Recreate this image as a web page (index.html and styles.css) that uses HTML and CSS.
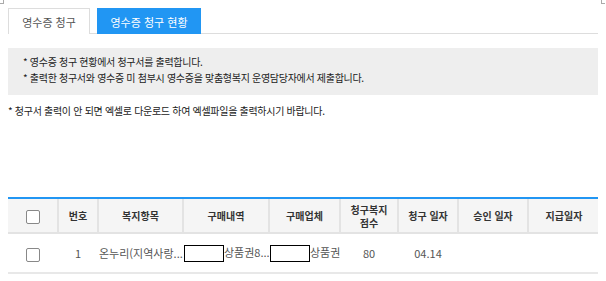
FILE: index.html
```html
<!DOCTYPE html>
<html lang="ko">
  <head>
    <meta charset="UTF-8" />
    <title>영수증 청구 현황</title>
    <link rel="stylesheet" href="styles.css">
  </head>
  <body>
    <span class="corner corner-left"></span>
    <span class="corner corner-right"></span>

    <div class="wrap">
      <div class="tabs">
        <a class="tab">영수증 청구</a>
        <a class="tab active">영수증 청구 현황</a>
      </div>

      <div class="info">
        <p>* 영수증 청구 현황에서 청구서를 출력합니다.</p>
        <p>* 출력한 청구서와 영수증 미 첨부시 영수증을 맞춤형복지 운영담당자에서 제출합니다.</p>
      </div>

      <p class="note">* 청구서 출력이 안 되면 엑셀로 다운로드 하여 엑셀파일을 출력하시기 바랍니다.</p>

      <table class="list">
        <colgroup>
          <col style="width: 50px" />
          <col style="width: 40px" />
          <col style="width: 85px" />
          <col style="width: 86px" />
          <col style="width: 71px" />
          <col style="width: 58px" />
          <col style="width: 60px" />
          <col style="width: 70px" />
          <col style="width: 71px" />
        </colgroup>
        <thead>
          <tr>
            <th><span class="check"></span></th>
            <th>번호</th>
            <th>복지항목</th>
            <th>구매내역</th>
            <th>구매업체</th>
            <th class="two"><span>청구복지</span><span>점수</span></th>
            <th>청구 일자</th>
            <th>승인 일자</th>
            <th>지급일자</th>
          </tr>
        </thead>
        <tbody>
          <tr>
            <td><span class="check"></span></td>
            <td>1</td>
            <td class="left">온누리(지역사랑...</td>
            <td class="left"><span class="mask"></span>상품권8...</td>
            <td class="left"><span class="mask"></span>상품권</td>
            <td>80</td>
            <td>04.14</td>
            <td></td>
            <td></td>
          </tr>
        </tbody>
      </table>
    </div>
  </body>
</html>
```

FILE: styles.css
```css
body {
  margin: 8px;
  font-family: "Noto Sans CJK KR", "Noto Sans", sans-serif;
  font-size: 10px;
  color: #444;
  background-color: #fff;
}
.corner {
  position: absolute;
  top: 0;
  width: 3px;
  height: 3px;
  border-color: #aaa;
  border-style: solid;
}
.corner-left {
  left: 0;
  border-width: 0 1px 1px 0;
}
.corner-right {
  left: 601px;
  border-width: 0 0 1px 1px;
}
.wrap {
  width: 591px;
}
.tabs {
  display: flex;
  gap: 7px;
  height: 25px;
  border-bottom: 1px solid #ddd;
}
.tab {
  display: flex;
  align-items: center;
  justify-content: center;
  height: 25px;
  width: 80px;
  border: 1px solid #ddd;
  border-bottom: none;
  font-size: 11px;
  color: #555;
  background-color: #fff;
}
.tab.active {
  width: 102px;
  border-color: #2196f3;
  background-color: #2196f3;
  color: #fff;
}
.info {
  margin-top: 14px;
  height: 47px;
  box-sizing: border-box;
  padding: 6px 15px 0;
  background-color: #eee;
  color: #222;
}
.info p,
.note {
  margin: 0;
  line-height: 16px;
  letter-spacing: -0.3px;
}
.note {
  margin-top: 8px;
  color: #222;
}
.list {
  margin-top: 78px;
  width: 591px;
  table-layout: fixed;
  border-collapse: collapse;
  text-align: center;
}
.list th {
  height: 33px;
  padding: 0;
  background-color: #f5f5f5;
  border-top: 2px solid #2196f3;
  border-left: 2px solid #e3e3e3;
  border-bottom: 2px solid #e3e3e3;
  color: #333;
  font-weight: bold;
  font-size: 10px;
}
.list th:first-child {
  border-left: none;
}
.list th.two span {
  display: block;
  line-height: 13px;
}
.list td {
  height: 38px;
  padding: 0;
  border-bottom: 2px solid #e8e8e8;
  color: #555;
  font-size: 11px;
  white-space: nowrap;
  overflow: hidden;
}
.list td.left {
  text-align: left;
  padding-left: 1px;
}
.check {
  display: inline-block;
  width: 12px;
  height: 12px;
  border: 1px solid #888;
  border-radius: 2px;
  background-color: #fff;
  vertical-align: middle;
}
.mask {
  display: inline-block;
  width: 38px;
  height: 15px;
  border: 1px solid #000;
  background-color: #fff;
  vertical-align: middle;
}
```
